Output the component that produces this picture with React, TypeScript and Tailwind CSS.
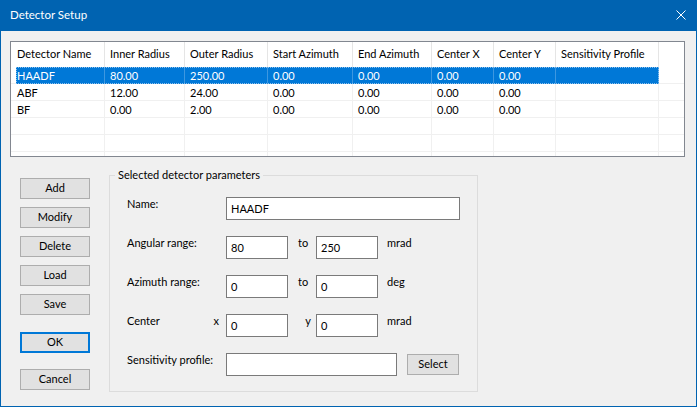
import React from 'react';

const font = { fontFamily: 'Lato, "Noto Sans", sans-serif' };

const columns = [
  { title: 'Detector Name', width: 'w-[94px]' },
  { title: 'Inner Radius', width: 'w-[80px]' },
  { title: 'Outer Radius', width: 'w-[83px]' },
  { title: 'Start Azimuth', width: 'w-[85px]' },
  { title: 'End Azimuth', width: 'w-[79px]' },
  { title: 'Center X', width: 'w-[62px]' },
  { title: 'Center Y', width: 'w-[62px]' },
  { title: 'Sensitivity Profile', width: 'w-[103px]' },
];

// body cells: first column is 5px narrower because of the row indent
const bodyWidths = ['w-[89px]', 'w-[80px]', 'w-[83px]', 'w-[85px]', 'w-[79px]', 'w-[62px]', 'w-[62px]', 'w-[103px]'];

const rows = [
  ['HAADF', '80.00', '250.00', '0.00', '0.00', '0.00', '0.00', ''],
  ['ABF', '12.00', '24.00', '0.00', '0.00', '0.00', '0.00', ''],
  ['BF', '0.00', '2.00', '0.00', '0.00', '0.00', '0.00', ''],
  ['', '', '', '', '', '', '', ''],
  ['', '', '', '', '', '', '', ''],
  ['', '', '', '', '', '', '', ''],
];

const Button = ({ label, primary = false }: { label: string; primary?: boolean }) => (
  <div
    className={`w-[70px] h-[21px] flex items-center justify-center bg-[#e1e1e1] text-black ${
      primary ? 'border-2 border-[#0078d7]' : 'border border-[#adadad]'
    }`}
  >
    {label}
  </div>
);

const Field = ({ value, width }: { value: string; width: string }) => (
  <div className={`${width} h-[23px] border border-[#7a7a7a] bg-white pl-[4px] flex items-center leading-none`}>
    {value}
  </div>
);

const DetectorTable = () => (
  <div className="ml-[9px] mt-[10px] w-[675px] h-[116px] border border-[#828790] bg-white overflow-hidden">
    {/* Header */}
    <div className="flex h-[25px]">
      {columns.map((c, i) => (
        <div
          key={c.title}
          className={`${c.width} ${i === 0 ? 'pl-[6px]' : 'pl-[5px]'} border-r border-[#e5e5e5] flex items-center whitespace-nowrap`}
        >
          {c.title}
        </div>
      ))}
      <div className="flex-1" />
    </div>

    {/* Rows */}
    {rows.map((r, ri) => (
      <div key={ri} className="flex h-[17px]">
        <div className="w-[5px] border-b border-[#f0f0f0]" />
        <div
          className={`flex ${
            ri === 0 ? 'bg-[#0078d7] text-white outline outline-1 outline-dotted outline-[#8cc0ec] -outline-offset-1' : ''
          }`}
        >
          {r.map((v, ci) => (
            <div
              key={ci}
              className={`${bodyWidths[ci]} ${ci === 0 ? 'pl-[1px]' : 'pl-[5px]'} border-r border-b ${
                ri === 0 ? 'border-r-[#3d97e0] border-b-[#0078d7]' : 'border-[#f0f0f0]'
              } flex items-center whitespace-nowrap leading-none`}
            >
              {v}
            </div>
          ))}
        </div>
        <div className="flex-1 border-b border-[#f0f0f0]" />
      </div>
    ))}
  </div>
);

const ParamRow = ({ children }: { children: React.ReactNode }) => (
  <div className="flex items-start h-[23px]">{children}</div>
);

const Label = ({ children, className = '' }: { children: React.ReactNode; className?: string }) => (
  <div className={`leading-[14px] whitespace-nowrap ${className}`}>{children}</div>
);

const ParametersGroup = () => (
  <fieldset className="ml-[19px] w-[369px] h-[225px] border border-[#dcdcdc] pl-[17px] pt-[14px]">
    <legend className="-ml-[12px] px-[3px] leading-[16px]">Selected detector parameters</legend>
    <div className="flex flex-col gap-[16px]">
      <ParamRow>
        <Label className="w-[99px]">Name:</Label>
        <Field value="HAADF" width="w-[234px]" />
      </ParamRow>
      <ParamRow>
        <Label className="w-[99px]">Angular range:</Label>
        <Field value="80" width="w-[62px]" />
        <Label className="w-[28px] pl-[10px]">to</Label>
        <Field value="250" width="w-[62px]" />
        <Label className="ml-[9px]">mrad</Label>
      </ParamRow>
      <ParamRow>
        <Label className="w-[99px]">Azimuth range:</Label>
        <Field value="0" width="w-[62px]" />
        <Label className="w-[28px] pl-[10px]">to</Label>
        <Field value="0" width="w-[62px]" />
        <Label className="ml-[9px]">deg</Label>
      </ParamRow>
      <ParamRow>
        <Label className="w-[99px] flex justify-between pr-[7px]">
          <span>Center</span>
          <span>x</span>
        </Label>
        <Field value="0" width="w-[62px]" />
        <Label className="w-[28px] text-right pr-[5px]">y</Label>
        <Field value="0" width="w-[62px]" />
        <Label className="ml-[9px]">mrad</Label>
      </ParamRow>
      <ParamRow>
        <Label className="w-[99px]">Sensitivity profile:</Label>
        <Field value="" width="w-[171px]" />
        <div className="ml-[10px] mt-[1px] w-[52px] h-[21px] flex items-center justify-center bg-[#e1e1e1] border border-[#adadad]">
          Select
        </div>
      </ParamRow>
    </div>
  </fieldset>
);

export default function App() {
  return (
    <div className="w-[697px] h-[407px] flex flex-col border border-t-0 border-[#0063b1] bg-[#f0f0f0] text-[11px] text-black" style={font}>
      {/* Title bar */}
      <div className="h-[31px] -mx-px bg-[#0063b1] flex items-center justify-between pl-[10px] pr-[11px] text-white shrink-0">
        <span className="text-[11.5px] pb-[1px]">Detector Setup</span>
        <svg width="10" height="10" viewBox="0 0 10 10" className="mb-[1px]">
          <path d="M0.5 0.5 L9.5 9.5 M9.5 0.5 L0.5 9.5" stroke="white" strokeWidth="1" />
        </svg>
      </div>

      <DetectorTable />

      <div className="flex mt-[10px]">
        {/* Buttons */}
        <div className="ml-[19px] flex flex-col pt-[11px]">
          <div className="flex flex-col gap-[8px]">
            <Button label="Add" />
            <Button label="Modify" />
            <Button label="Delete" />
            <Button label="Load" />
            <Button label="Save" />
          </div>
          <div className="mt-[17px]">
            <Button label="OK" primary />
          </div>
          <div className="mt-[16px]">
            <Button label="Cancel" />
          </div>
        </div>

        <ParametersGroup />
      </div>
    </div>
  );
}
